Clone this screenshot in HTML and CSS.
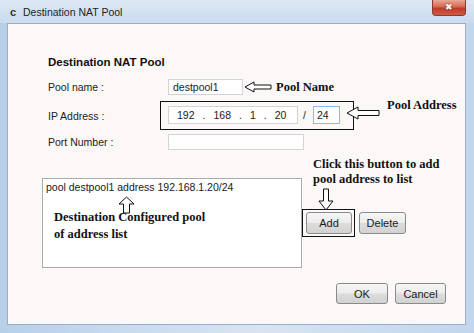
FILE: index.html
```html
<!DOCTYPE html>
<html>
<head>
<meta charset="utf-8">
<link rel="stylesheet" href="styles.css">
</head>
<body>
<div class="window">
  <div class="titlebar">
    <span class="app-icon">c</span>
    <span class="title">Destination NAT Pool</span>
    <div class="close">&#x2716;</div>
  </div>
  <div class="client">
    <div class="form">
      <div class="heading">Destination NAT Pool</div>
      <div class="row row-name">
        <div class="label">Pool name :</div>
        <div class="field">
          <div class="input name-input">destpool1</div>
          <svg class="arrow-left" width="28" height="12" viewBox="0 0 28 12"><polygon points="1,6 10,1 10,4 27,4 27,8 10,8 10,11" fill="#fff" stroke="#111" stroke-width="1"/></svg>
          <span class="note note-name">Pool Name</span>
        </div>
      </div>
      <div class="row row-ip">
        <div class="label">IP Address :</div>
        <div class="field">
          <div class="ip-box">
            <div class="input ip-input"><span>192</span><span class="dot">.</span><span>168</span><span class="dot">.</span><span>1</span><span class="dot">.</span><span>20</span></div>
            <span class="slash">/</span>
            <div class="input mask-input">24</div>
          </div>
          <svg class="arrow-ip" width="34" height="14" viewBox="0 0 34 14"><polygon points="1,7 12,1 12,4.5 33,4.5 33,9.5 12,9.5 12,13" fill="#fff" stroke="#111" stroke-width="1"/></svg>
          <span class="note note-ip">Pool Address</span>
        </div>
      </div>
      <div class="row row-port">
        <div class="label">Port Number :</div>
        <div class="field">
          <div class="input port-input"></div>
        </div>
      </div>
      <div class="lower">
        <div class="listbox">
          <div class="list-item">pool destpool1 address 192.168.1.20/24</div>
          <svg class="arrow-up" width="17" height="18" viewBox="0 0 17 18"><polygon points="8.5,1 16,8 11.5,8 11.5,17 5.5,17 5.5,8 1,8" fill="#fff" stroke="#111" stroke-width="1"/></svg>
          <div class="note note-list">Destination Configured pool<br>of address list</div>
        </div>
        <div class="side">
          <div class="note note-add">Click this button to add<br>pool address to list</div>
          <svg class="arrow-down" width="16" height="23" viewBox="0 0 16 23"><polygon points="8,22 15,13 10.5,13 10.5,1 5.5,1 5.5,13 1,13" fill="#fff" stroke="#111" stroke-width="1"/></svg>
          <div class="btn-row">
            <div class="add-frame"><div class="btn btn-add">Add</div></div>
            <div class="btn btn-delete">Delete</div>
          </div>
        </div>
      </div>
      <div class="footer">
        <div class="btn btn-ok">OK</div>
        <div class="btn btn-cancel">Cancel</div>
      </div>
    </div>
  </div>
</div>
</body>
</html>
```
FILE: styles.css
```css
html, body {
  margin: 0;
  padding: 0;
}
body {
  width: 474px;
  height: 333px;
  overflow: hidden;
  font-family: "Liberation Sans", Arial, sans-serif;
  color: #1a1a1a;
}
.window {
  width: 474px;
  height: 333px;
  background: linear-gradient(90deg, #b7cfe8 0%, #cbdcef 30%, #d7e4f2 55%, #c2d6ec 100%);
  display: flex;
  flex-direction: column;
}
.titlebar {
  height: 23px;
  display: flex;
  align-items: center;
  padding-left: 10px;
  padding-right: 8px;
  background: linear-gradient(180deg, #dce8f5 0%, #c9dbee 100%);
}
.app-icon {
  font-size: 11px;
  font-weight: bold;
  color: #333;
  width: 13px;
}
.title {
  font-size: 10.5px;
  color: #1e1e1e;
}
.close {
  margin-left: auto;
  align-self: flex-start;
  width: 34px;
  height: 16px;
  box-sizing: border-box;
  background: linear-gradient(180deg, #e9a796 0%, #d56a55 45%, #c0392b 55%, #cf5a44 100%);
  border: 1px solid #8a3a30;
  border-top: none;
  border-radius: 0 0 4px 4px;
  color: #fff;
  font-size: 9px;
  line-height: 15px;
  text-align: center;
  text-shadow: 0 0 2px #6b1d10;
}
.client {
  margin: 0 8px 0 7px;
  height: 302px;
  box-sizing: border-box;
  border: 1px solid #97aecb;
  background: #fdf8f8;
}
.form {
  padding-left: 34px;
  padding-top: 31px;
  font-size: 10.5px;
}
.heading {
  margin-left: 6px;
  font-size: 11.5px;
  font-weight: bold;
  line-height: 14px;
  color: #111;
}
.row {
  display: grid;
  grid-template-columns: 120px auto;
  align-items: center;
  margin-left: 6px;
}
.label {
  color: #222;
}
.field {
  display: flex;
  align-items: center;
}
.input {
  box-sizing: border-box;
  height: 16px;
  border: 1px solid #d2d4d8;
  background: #fff;
  line-height: 14px;
  padding-left: 4px;
  color: #222;
}
.row-name {
  margin-top: 10px;
}
.name-input {
  width: 75px;
}
.arrow-left {
  margin-left: 1px;
}
.note {
  font-family: "Liberation Serif", "Times New Roman", serif;
  font-weight: bold;
  font-size: 12.5px;
  color: #111;
}
.note-name {
  margin-left: 4px;
}
.row-ip {
  margin-top: 6px;
}
.ip-box {
  margin-left: -8px;
  box-sizing: border-box;
  height: 29px;
  width: 194px;
  border: 1px solid #111;
  padding: 4px 0 0 7px;
  display: flex;
  align-items: flex-start;
}
.ip-input {
  width: 130px;
  height: 18px;
  line-height: 16px;
  padding-left: 8px;
  display: flex;
}
.ip-input .dot {
  margin: 0 8px;
}
.slash {
  margin-left: 5px;
  line-height: 18px;
  width: 10px;
}
.mask-input {
  width: 27px;
  height: 18px;
  line-height: 16px;
  border-color: #8fb9e6;
  padding-left: 3px;
}
.arrow-ip {
  margin-left: -8px;
  position: relative;
  top: -3px;
}
.note-ip {
  margin-left: 7px;
  align-self: flex-start;
  margin-top: -3px;
}
.row-port {
  margin-top: 4px;
}
.port-input {
  width: 136px;
}
.lower {
  display: flex;
  margin-top: 7px;
}
.listbox {
  margin-top: 21px;
  width: 260px;
  height: 90px;
  box-sizing: border-box;
  border: 1px solid #a9abb0;
  background: #fff;
  padding: 2px 0 0 3px;
}
.list-item {
  line-height: 13px;
  color: #1a1a1a;
}
.arrow-up {
  display: block;
  margin-left: 72px;
  margin-top: 2px;
}
.note-list {
  margin-left: 8px;
  margin-top: -5px;
  line-height: 17px;
}
.side {
  display: flex;
  flex-direction: column;
}
.note-add {
  margin-left: 11px;
  line-height: 15px;
}
.arrow-down {
  display: block;
  margin-left: 16px;
  margin-top: 1px;
  position: relative;
  z-index: 1;
}
.btn-row {
  display: flex;
  align-items: center;
  margin-top: -2px;
}
.add-frame {
  box-sizing: border-box;
  width: 53px;
  height: 28px;
  border: 1px solid #111;
  padding: 2px 0 0 3px;
}
.btn {
  box-sizing: border-box;
  height: 22px;
  border: 1px solid #8a8a8a;
  border-radius: 3px;
  background: linear-gradient(180deg, #f6f6f6 0%, #ececec 48%, #dcdcdc 52%, #d2d2d2 100%);
  text-align: center;
  line-height: 20px;
  font-size: 11px;
  color: #1a1a1a;
}
.btn-add {
  width: 46px;
}
.btn-delete {
  width: 47px;
  margin-left: 4px;
}
.footer {
  display: flex;
  justify-content: flex-end;
  gap: 7px;
  margin-top: 15px;
  padding-right: 19px;
}
.btn-ok {
  width: 52px;
  height: 21px;
}
.btn-cancel {
  width: 51px;
  height: 21px;
}
```
